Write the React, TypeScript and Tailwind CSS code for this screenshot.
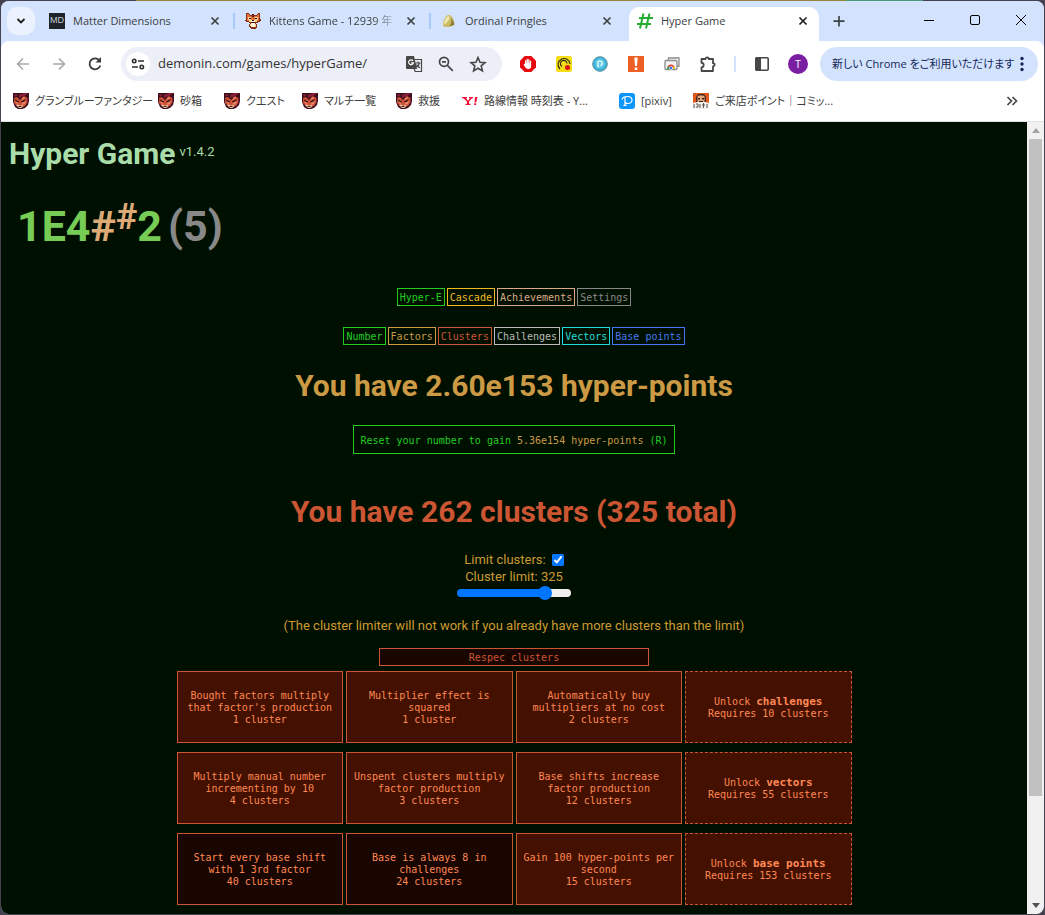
import { useState, type ReactNode } from "react";

const ui = "font-['Open_Sans','Noto_Sans_CJK_JP',sans-serif] [font-feature-settings:'palt']";
const pixel = "font-['Roboto',sans-serif]";
const mono = "font-['DejaVu_Sans_Mono',monospace] text-[10px]";

function CloseIcon() {
  return (
    <svg width="16" height="16" viewBox="0 0 16 16" fill="none" stroke="currentColor" strokeWidth="1.7">
      <path d="M4.5 4.5l7 7M11.5 4.5l-7 7" />
    </svg>
  );
}

function MatterIcon() {
  return (
    <span className="flex h-4 w-4 items-center justify-center bg-[#1d2328] font-['Liberation_Sans',sans-serif] text-[9px] text-[#c8ccd0]">
      MD
    </span>
  );
}

function KittenIcon() {
  return (
    <svg width="16" height="16" viewBox="0 0 16 16" shapeRendering="crispEdges">
      <path fill="#8a3019" d="M1 0h2l2 2h6l2-2h2v6l1 1v1l-2 1-3 1 1 2v2l-2 2H6l-2-2v-2l1-2-3-1L0 8V7l1-1z" />
      <path fill="#e2703a" d="M2 1h1l2 2h6l2-2h1v5H2zM2 6h12v2H2z" />
      <path fill="#f7cf8b" d="M3 4h3v3H3zM10 4h3v3h-3zM4 7h8v2H4zM5 11h6v3H6z" />
      <path fill="#fff3d8" d="M6 7h4v2H6zM6 10h4v4H6z" />
      <path fill="#45130e" d="M4 5h2v1H4zM10 5h2v1h-2zM7 7h2v1H7zM6 9h4v1H6zM7 3h2v1H7zM7 1h2v1H7z" />
    </svg>
  );
}

function PringleIcon() {
  return (
    <svg width="16" height="16" viewBox="0 0 16 16">
      <path d="M2 13C1.500 8 4.500 2 8 2c3 0 5 5 5.500 9.500-2 2.500-8.500 3.500-11.500 1.500z" fill="#cdbb66" />
      <path d="M3 11.500C3 7 5.500 3 8 3c1.500 2-1 6.500-5 8.500z" fill="#efe5ae" />
      <path d="M8 13c2-1 3-4 2-8 2 1.500 3 4 3.300 6.500-1 1-3 1.700-5.300 1.500z" fill="#8f7f37" />
    </svg>
  );
}

function HashIcon() {
  return (
    <svg width="16" height="16" viewBox="0 0 16 16" fill="none" stroke="#27ad32" strokeWidth="2">
      <path d="M6.500 0.500L3 15.500M12.500 0.500L9 15.500M2 5h14M0 11h14" />
    </svg>
  );
}

function DemonIcon() {
  return (
    <svg width="16" height="16" viewBox="0 0 16 16">
      <path fill="#3d0f1c" d="M0 0h16v8l-1 4-3 3-3 1H5l-3-2-2-5z" />
      <path fill="#8a2038" d="M1 1l4 1-3 2zM6 2l5-2h4l-4 3-5 2zM13 4l2 1v4l-1 1z" />
      <path fill="#cf5138" d="M1 5l3-1 3 3 4-4 3 2v5l-2 3-4 1-4-1-3-3z" />
      <path fill="#e98360" d="M9 9l4-2-1 4-3 1zM2 7l3 2v2L3 10zM9 5l2-1 1 1-3 2z" />
      <path fill="#2a0b0d" d="M1 6l5 2.500v1L3 8.500zM8 8.500L13 6l-1 2-3 1.500z" />
      <path fill="#e3c9a4" d="M3 12l2-.5 2 1.200 2-.7 1.500 1-2 2H6z" />
      <path fill="#5b1813" d="M5.500 13h3v1h-3z" />
    </svg>
  );
}

function YahooIcon() {
  return (
    <svg width="16" height="16" viewBox="0 0 16 16" fill="#f0103a">
      <path d="M0 4h5v1.300H4l2 2.400L8 5.300H7V4h4v1.300H9.900L7 8.800v2h1.500V12h-5v-1.200H5v-2L1.500 5.300H0z" />
      <path d="M13 4h2.500L14.200 9.500H12.500zM12.200 10.300h2v1.800h-2z" />
    </svg>
  );
}

function PixivIcon() {
  return (
    <svg width="16" height="16" viewBox="0 0 16 16" fill="none">
      <rect width="16" height="16" rx="3" fill="#0a96fa" />
      <path d="M3 6.500C3.500 4.500 6 3.500 8.500 3.500c2.500 0 4.500 1.300 4.500 3.500s-2 3.500-4 3.500c-1.300 0-2.500-.4-3-1M6 4.200v7.500M4.500 12.300h3" stroke="#fff" strokeWidth="1.200" />
    </svg>
  );
}

function ComicIcon() {
  return (
    <svg width="16" height="16" viewBox="0 0 16 16">
      <path fill="#e2581c" d="M0 0h16v11H0z" />
      <path fill="#4b2a20" d="M3 4l2-3h6l2 3v5H3z" />
      <path fill="#e9a77c" d="M4.500 3.500L6 2.500h4l1.500 1V9h-7z" />
      <path fill="#27201f" d="M5 5h2v1.500H5zM9 5h2v1.500H9zM6 8h4v1H6z" />
      <path fill="#f4f2ee" d="M0 10l4-1h8l4 1v6H0z" />
      <path d="M1 11v4M3 11h2v3H3M7 11v4M9 12h3M10.500 10v5M14 11v4" stroke="#5a5350" fill="none" />
    </svg>
  );
}

type Tab = { title: string; icon: ReactNode; fade?: boolean };

const tabs: Tab[] = [
  { title: "Matter Dimensions", icon: <MatterIcon /> },
  { title: "Kittens Game - 12939 年", icon: <KittenIcon />, fade: true },
  { title: "Ordinal Pringles", icon: <PringleIcon /> },
];

function TabStrip() {
  return (
    <div className="flex h-10 items-stretch bg-[#d3e3fd] text-[#3c4043]">
      <button aria-label="Search tabs" className="mt-1.5 ml-1.5 flex h-7 w-7 shrink-0 items-center justify-center rounded-[10px] bg-[#ebf2fe] text-[#1f1f1f]">
        <svg width="16" height="16" viewBox="0 0 16 16" fill="none" stroke="currentColor" strokeWidth="1.800">
          <path d="M4.500 6l3.500 3.500L11.500 6" />
        </svg>
      </button>
      <div className="flex min-w-0 pl-1.5">
        {tabs.map((tab, i) => (
          <div key={tab.title} className="flex w-[196px] min-w-0 items-center pl-2">
            <span className="mr-2 shrink-0">{tab.icon}</span>
            <span
              className={
                "flex-1 overflow-hidden text-[11px] leading-4 whitespace-nowrap " +
                (tab.fade ? "[mask-image:linear-gradient(to_right,black_80%,transparent)]" : "")
              }
            >
              {tab.title}
            </span>
            <button aria-label={"Close " + tab.title} className="ml-1 shrink-0">
              <CloseIcon />
            </button>
            <span className={"mr-0.5 ml-2.5 h-4 w-0.5 shrink-0 " + (i < 2 ? "bg-[#a8c7fa]" : "")} />
          </div>
        ))}
        <div className="flex w-[190px] min-w-0 pt-1.5">
          <div className="flex min-w-0 flex-1 items-center rounded-t-[10px] bg-white px-2 pb-1.5">
            <span className="mr-2 shrink-0">
              <HashIcon />
            </span>
            <span className="flex-1 overflow-hidden text-[11px] leading-4 whitespace-nowrap">Hyper Game</span>
            <button aria-label="Close Hyper Game" className="shrink-0 text-[#1f1f1f]">
              <CloseIcon />
            </button>
          </div>
        </div>
      </div>
      <button aria-label="New tab" className="ml-3 flex w-4 items-center justify-center">
        <svg width="16" height="16" viewBox="0 0 16 16" stroke="currentColor" strokeWidth="1.700">
          <path d="M8 3v10.500M2.500 8.200h11" />
        </svg>
      </button>
      <div className="ml-auto flex text-black">
        <button aria-label="Minimize" className="flex w-[46px] items-center justify-center">
          <svg width="12" height="12" viewBox="0 0 12 12" stroke="currentColor">
            <path d="M1 5.500h10" />
          </svg>
        </button>
        <button aria-label="Maximize" className="flex w-[46px] items-center justify-center">
          <svg width="12" height="12" viewBox="0 0 12 12" fill="none" stroke="currentColor">
            <rect x="1.500" y="0.500" width="9" height="9" rx="1.500" />
          </svg>
        </button>
        <button aria-label="Close window" className="flex w-[46px] items-center justify-center">
          <svg width="12" height="12" viewBox="0 0 12 12" stroke="currentColor">
            <path d="M1 0l10 10M11 0L1 10" />
          </svg>
        </button>
      </div>
    </div>
  );
}

function ToolButton({ label, children }: { label: string; children: ReactNode }) {
  return (
    <button aria-label={label} className="flex h-5 w-5 shrink-0 items-center justify-center text-[#474747]">
      {children}
    </button>
  );
}

function Toolbar() {
  return (
    <div className="flex h-[46px] items-center rounded-t-lg bg-white pr-1.5 pl-3">
      <div className="flex items-center gap-4">
        <button aria-label="Back" className="text-[#a9a9a9]">
          <svg width="20" height="16" viewBox="0 0 20 16" fill="none" stroke="currentColor" strokeWidth="1.600">
            <path d="M16 8H5M10 2.500L4.500 8l5.500 5.500" />
          </svg>
        </button>
        <button aria-label="Forward" className="text-[#a9a9a9]">
          <svg width="20" height="16" viewBox="0 0 20 16" fill="none" stroke="currentColor" strokeWidth="1.600">
            <path d="M4 8h11M10 2.500l5.500 5.500-5.500 5.500" />
          </svg>
        </button>
        <button aria-label="Reload" className="text-[#3c3c3c]">
          <svg width="20" height="16" viewBox="0 0 20 16" fill="none" stroke="currentColor" strokeWidth="1.800">
            <path d="M15.300 9.500A5.500 5.500 0 1 1 14.300 4.300" />
            <path d="M16 1v5.500h-5.500z" fill="currentColor" stroke="none" />
          </svg>
        </button>
      </div>
      <div className="ml-4 flex h-[34px] w-[381px] min-w-0 items-center rounded-full bg-[#eceef8] pl-[5px]">
        <button aria-label="Site information" className="flex h-6 w-6 shrink-0 items-center justify-center rounded-full bg-white text-[#2f2f2f]">
          <svg width="14" height="14" viewBox="0 0 14 14" fill="none" stroke="currentColor" strokeWidth="1.600">
            <circle cx="3.200" cy="4" r="1.700" />
            <path d="M7 4h6M1 10h6" />
            <circle cx="10.800" cy="10" r="1.700" />
          </svg>
        </button>
        <input
          aria-label="Address"
          defaultValue="demonin.com/games/hyperGame/"
          className="ml-2 min-w-0 flex-1 bg-transparent text-[13px] text-[#333] outline-none"
        />
        <div className="mr-3.5 flex items-center gap-3">
          <ToolButton label="Translate">
            <svg width="18" height="18" viewBox="0 0 18 18" fill="none">
              <path d="M2 1h7l3 13H2a1 1 0 0 1-1-1V2a1 1 0 0 1 1-1z" fill="#474747" />
              <path d="M8.500 4.500h8v12h-6.300l-1-2.500M10.500 8h5M13 6.500V8M14.500 8c-.5 2-2 3.500-3.500 4.200M11.500 9.500c.5 1.500 2 2.800 3.500 3.200" stroke="#474747" strokeWidth="1.200" />
              <path d="M8 5.800a2.400 2.400 0 1 0 .4 2H6.200" stroke="#fff" strokeWidth="1.200" />
            </svg>
          </ToolButton>
          <ToolButton label="Zoom">
            <svg width="18" height="18" viewBox="0 0 18 18" fill="none" stroke="currentColor" strokeWidth="1.700">
              <circle cx="7" cy="6.800" r="4.500" />
              <path d="M10.300 10.300l5.500 5.500M5 6.800h4" />
            </svg>
          </ToolButton>
          <ToolButton label="Bookmark">
            <svg width="18" height="18" viewBox="0 0 18 18" fill="none" stroke="currentColor" strokeWidth="1.600">
              <path d="M9 2.500l2 4.700 5 .4-3.800 3.300 1.200 5L9 13.200l-4.400 2.700 1.200-5L2 7.600l5-.4z" />
            </svg>
          </ToolButton>
        </div>
      </div>
      <div className="ml-4 flex items-center gap-4">
        <ToolButton label="Ad blocker">
          <svg width="16" height="16" viewBox="0 0 16 16" className="shrink-0">
            <path d="M4.700 0h6.600L16 4.700v6.600L11.300 16H4.700L0 11.300V4.700z" fill="#e8090e" />
            <path d="M5 8V4.500a.7.7 0 0 1 1.300 0V7h.3V3.300a.7.7 0 0 1 1.300 0V7h.3V3.500a.7.7 0 0 1 1.300 0V7.500h.3V5a.7.700 0 0 1 1.300 0v5.500c0 1.500-1 2.500-2.800 2.500-1.700 0-2.500-.8-3.300-2L3.700 8.500c.2-.8.900-.8 1.300-.5z" fill="#fff" />
          </svg>
        </ToolButton>
        <ToolButton label="Recorder">
          <svg width="16" height="16" viewBox="0 0 16 16" fill="none">
            <rect width="16" height="16" rx="2" fill="#f6dd17" />
            <path d="M4 13A6 6 0 1 1 14 8M6 10.500A3.300 3.300 0 1 1 11 7.500" stroke="#2b2a1a" strokeWidth="1.100" />
            <circle cx="11.500" cy="11.500" r="2.500" fill="#e0101a" />
          </svg>
        </ToolButton>
        <ToolButton label="Pushbullet">
          <svg width="16" height="16" viewBox="0 0 16 16" fill="none">
            <circle cx="8" cy="8" r="7.300" fill="#3cb4d8" stroke="#5d8c9c" />
            <circle cx="8" cy="7.500" r="4.800" fill="#63cbe8" />
            <path d="M6 11.500V6a2.300 2.300 0 1 1 2.500 3.500" stroke="#fff" strokeWidth="1.200" />
          </svg>
        </ToolButton>
        <ToolButton label="Alert">
          <svg width="16" height="16" viewBox="0 0 16 16">
            <path fill="#ec6028" d="M0 0h16v16H0z" />
            <path fill="#fff" d="M6.300 1.500h3.400L9 10H7zM6.700 11.500h2.600V14H6.700z" />
          </svg>
        </ToolButton>
        <ToolButton label="Remote desktop">
          <svg width="16" height="16" viewBox="0 0 16 16" fill="none">
            <path d="M4.500 4V2h10.500v8h-2" stroke="#8b8b8b" strokeWidth="1.300" />
            <rect x="1" y="4.500" width="12" height="9" rx="1" fill="#f3f3f3" stroke="#8b8b8b" strokeWidth="1.300" />
            <path d="M3 13a4 4 0 0 1 1-3l3 3z" fill="#2da44f" />
            <path d="M3.500 10.500a4 4 0 0 1 7 0L7 12z" fill="#e33b2e" />
            <path d="M10.300 10A4 4 0 0 1 11 13H7z" fill="#f5bd1b" />
            <circle cx="7" cy="12" r="1.700" fill="#3b7de0" stroke="#fff" strokeWidth=".5" />
          </svg>
        </ToolButton>
        <ToolButton label="Extensions">
          <svg width="18" height="18" viewBox="0 0 18 18" fill="none" stroke="currentColor" strokeWidth="1.800">
            <path d="M2.500 4h4a1.600 1.600 0 0 1 3.200 0H14v4.200a1.600 1.600 0 0 1 0 3.200V16H2.500v-3.700a2.200 2.200 0 0 0 0-4.400z" strokeLinejoin="round" />
          </svg>
        </ToolButton>
      </div>
      <span className="mx-4 h-4 w-0.5 shrink-0 bg-[#d3e3fd]" />
      <div className="flex items-center gap-4">
        <ToolButton label="Side panel">
          <svg width="16" height="16" viewBox="0 0 16 16" fill="none">
            <rect x="1.800" y="1.800" width="12.400" height="12.400" rx="1" stroke="#474747" strokeWidth="1.600" />
            <path d="M1.500 1.500H7v13H1.500z" fill="#474747" />
          </svg>
        </ToolButton>
        <button aria-label="Profile" className="flex h-5 w-5 shrink-0 items-center justify-center rounded-full bg-[#7b1fa2] text-[10px] text-white">
          T
        </button>
      </div>
      <button className="ml-3 flex h-[34px] min-w-0 flex-1 items-center justify-between rounded-full bg-[#d3e3fd] pr-3 pl-3 text-[11px] whitespace-nowrap text-[#14275a]">
        新しい Chrome をご利用いただけます
        <svg width="8" height="16" viewBox="0 0 8 16" fill="currentColor" className="shrink-0">
          <circle cx="4" cy="2.500" r="1.700" />
          <circle cx="4" cy="8" r="1.700" />
          <circle cx="4" cy="13.500" r="1.700" />
        </svg>
      </button>
    </div>
  );
}

const bookmarks: { label: string; icon: ReactNode; width: string }[] = [
  { label: "グランブルーファンタジー", icon: <DemonIcon />, width: "w-[145px]" },
  { label: "砂箱", icon: <DemonIcon />, width: "w-[66px]" },
  { label: "クエスト", icon: <DemonIcon />, width: "w-[78px]" },
  { label: "マルチ一覧", icon: <DemonIcon />, width: "w-[94px]" },
  { label: "救援", icon: <DemonIcon />, width: "w-[66px]" },
  { label: "路線情報 時刻表 - Y...", icon: <YahooIcon />, width: "w-[157px]" },
  { label: "[pixiv]", icon: <PixivIcon />, width: "w-[74px]" },
  { label: "ご来店ポイント｜コミッ...", icon: <ComicIcon />, width: "w-auto" },
];

function BookmarkBar() {
  return (
    <nav aria-label="Bookmarks" className="flex h-[35px] items-start border-b border-[#dfe1e5] bg-white pr-6 pl-3 text-[11px] text-[#3c3c3c]">
      <div className="flex min-w-0 flex-1 overflow-hidden pt-1.5">
        {bookmarks.map((b) => (
          <a key={b.label} href="#" className={"flex h-4 shrink-0 items-center gap-1.5 leading-4 whitespace-nowrap " + b.width}>
            {b.icon}
            {b.label}
          </a>
        ))}
      </div>
      <button aria-label="More bookmarks" className="pt-1.5">
        <svg width="16" height="16" viewBox="0 0 16 16" fill="none" stroke="#474747" strokeWidth="1.700">
          <path d="M3.500 4l4 4-4 4M8.500 4l4 4-4 4" />
        </svg>
      </button>
    </nav>
  );
}

const mainNav = [
  { label: "Hyper-E", tone: "border-[#22cc22] text-[#22cc22]" },
  { label: "Cascade", tone: "border-[#eebb22] text-[#eebb22]" },
  { label: "Achievements", tone: "border-[#ddaa88] text-[#ddaa88]" },
  { label: "Settings", tone: "border-[#888888] text-[#888888]" },
];

const subNav = [
  { label: "Number", tone: "border-[#22cc22] text-[#22cc22]" },
  { label: "Factors", tone: "border-[#cc9944] text-[#cc9944]" },
  { label: "Clusters", tone: "border-[#cc5533] text-[#cc5533]" },
  { label: "Challenges", tone: "border-[#bbbbbb] text-[#bbbbbb]" },
  { label: "Vectors", tone: "border-[#22dddd] text-[#22dddd]" },
  { label: "Base points", tone: "border-[#4477ee] text-[#4477ee]" },
];

function NavRow({ items, label }: { items: { label: string; tone: string }[]; label: string }) {
  return (
    <nav aria-label={label} className="flex flex-wrap justify-center gap-0.5">
      {items.map((item) => (
        <button key={item.label} className={"border px-0.5 pt-0.5 leading-[14px] " + mono + " " + item.tone}>
          {item.label}
        </button>
      ))}
    </nav>
  );
}

type Upgrade = { text: string; bold?: string; cost: string; dark?: boolean };

const upgrades: Upgrade[] = [
  { text: "Bought factors multiply that factor's production", cost: "1 cluster" },
  { text: "Multiplier effect is squared", cost: "1 cluster" },
  { text: "Automatically buy multipliers at no cost", cost: "2 clusters" },
  { text: "Unlock ", bold: "challenges", cost: "Requires 10 clusters" },
  { text: "Multiply manual number incrementing by 10", cost: "4 clusters" },
  { text: "Unspent clusters multiply factor production", cost: "3 clusters" },
  { text: "Base shifts increase factor production", cost: "12 clusters" },
  { text: "Unlock ", bold: "vectors", cost: "Requires 55 clusters" },
  { text: "Start every base shift with 1 3rd factor", cost: "40 clusters", dark: true },
  { text: "Base is always 8 in challenges", cost: "24 clusters", dark: true },
  { text: "Gain 100 hyper-points per second", cost: "15 clusters" },
  { text: "Unlock ", bold: "base points", cost: "Requires 153 clusters" },
];

function Game() {
  const [limited, setLimited] = useState(true);
  const [limit, setLimit] = useState(325);
  const max = 400;
  const filled = (limit / max) * 100;

  return (
    <main className="min-w-0 flex-1 bg-[#001000] pt-3 pb-[9px]">
      <h1 className={"flex items-start gap-1 pl-2 text-[30px] leading-10 font-bold text-[#aaddaa] " + pixel}>
        Hyper Game
        <span className="pt-2.5 text-[13px] leading-4 font-normal">v1.4.2</span>
      </h1>
      <div className={"mt-7 pl-4 text-[43px] leading-12 font-bold whitespace-nowrap text-[#77cc55] " + pixel}>
        1E4
        <span className="text-[#ddaa77]">
          #<sup className="-top-3 text-[36px] leading-none">#</sup>
        </span>
        2<span className="ml-1.5 text-[#888888]">(5)</span>
      </div>

      <div className="mt-[38px] flex flex-col gap-[21px]">
        <NavRow items={mainNav} label="Sections" />
        <NavRow items={subNav} label="Hyper-E pages" />
      </div>

      <div className="flex flex-col items-center text-center">
        <h2 className={"mt-[21px] text-[30px] leading-10 font-bold text-[#cc9944] " + pixel}>
          You have 2.60e153 hyper-points
        </h2>
        <button className={"mt-[19px] border border-[#22cc22] px-1.5 pt-0.5 leading-[25px] text-[#22cc22] " + mono}>
          Reset your number to gain <span className="text-[#cc9944]">5.36e154 hyper-points</span> (R)
        </button>

        <h2 className={"mt-[38px] text-[30px] leading-10 font-bold text-[#cc5533] " + pixel}>
          You have 262 clusters (325 total)
        </h2>
        <div className={"mt-[19px] flex flex-col items-center text-[13px] leading-[17px] text-[#cc9933] " + pixel}>
          <label className="flex items-center gap-1.5">
            Limit clusters:
            <input type="checkbox" checked={limited} onChange={(e) => setLimited(e.target.checked)} className="h-3 w-3 accent-[#0075ff]" />
          </label>
          <label htmlFor="limit">Cluster limit: {limit}</label>
          <input
            id="limit"
            type="range"
            min={0}
            max={max}
            value={limit}
            onChange={(e) => setLimit(Number(e.target.value))}
            style={{ backgroundImage: `linear-gradient(to right, #0075ff ${filled}%, #efefef ${filled}%)` }}
            className="mt-1 mb-[3px] h-2 w-[114px] appearance-none rounded-full [&::-webkit-slider-thumb]:h-3.5 [&::-webkit-slider-thumb]:w-3.5 [&::-webkit-slider-thumb]:appearance-none [&::-webkit-slider-thumb]:rounded-full [&::-webkit-slider-thumb]:bg-[#0075ff]"
          />
          <p className="mt-[17px]">(The cluster limiter will not work if you already have more clusters than the limit)</p>
        </div>
        <button className={"mt-3.5 w-[270px] border border-[#cc5533] bg-[#1a0600] pt-0.5 leading-[14px] text-[#cc5533] " + mono}>
          Respec clusters
        </button>
        <div className="mt-[5px] grid w-full max-w-[675px] grid-cols-4 gap-x-[3px] gap-y-[9px]">
          {upgrades.map((u) => (
            <button
              key={u.text + u.cost}
              className={
                "flex h-[72px] flex-col items-center justify-center border border-[#cc5533] px-1 pt-0.5 leading-3 text-[#ff8855] " +
                mono +
                (u.bold ? " border-dashed" : "") +
                (u.dark ? " bg-[#1a0600]" : " bg-[#441100]")
              }
            >
              <span>
                {u.text}
                {u.bold && <b className="text-[11px] leading-none">{u.bold}</b>}
              </span>
              <span>{u.cost}</span>
            </button>
          ))}
        </div>
      </div>
    </main>
  );
}

function Scrollbar() {
  return (
    <div aria-hidden="true" className="flex w-[17px] shrink-0 flex-col items-stretch rounded-br-lg bg-[#f1f1f1]">
      <span className="flex h-[17px] items-center justify-center">
        <svg width="8" height="5" viewBox="0 0 8 5" fill="#a3a3a3">
          <path d="M4 0l4 5H0z" />
        </svg>
      </span>
      <span className="mx-0.5 flex-[657] bg-[#c1c1c1]" />
      <span className="flex-[101]" />
      <span className="flex h-[17px] items-center justify-center">
        <svg width="8" height="5" viewBox="0 0 8 5" fill="#505050">
          <path d="M0 0h8L4 5z" />
        </svg>
      </span>
    </div>
  );
}

export default function App() {
  return (
    <div className={"flex min-h-screen flex-col bg-[#45414f] px-px pb-px " + ui}>
      <div className="flex h-px">
        <span className="flex-[135]" />
        <span className="flex-[712] bg-[#97833b]" />
        <span className="flex-[77] bg-[#4a9a7c]" />
        <span className="flex-[121]" />
      </div>
      <div className="flex flex-1 flex-col overflow-hidden rounded-lg bg-[#d3e3fd]">
        <TabStrip />
        <Toolbar />
        <BookmarkBar />
        <div className="flex flex-1">
          <Game />
          <Scrollbar />
        </div>
      </div>
    </div>
  );
}
